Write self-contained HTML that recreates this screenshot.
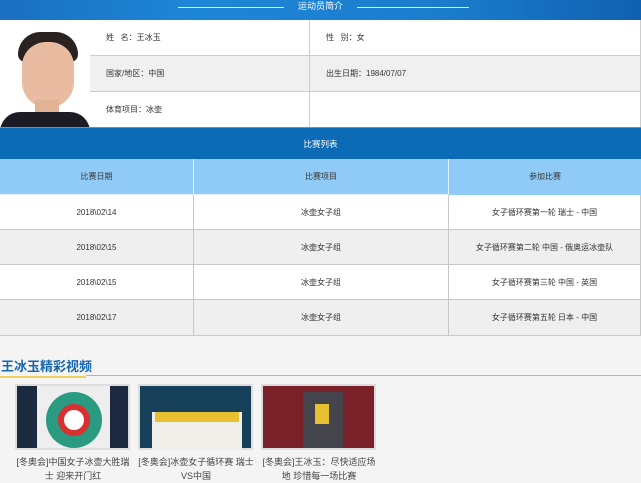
<!DOCTYPE html>
<html><head><meta charset="utf-8"><style>
*{margin:0;padding:0;box-sizing:border-box}
body{width:641px;height:474px;overflow:hidden;background:#f4f4f4;font-family:"Liberation Sans","Noto Sans CJK SC",sans-serif;font-size:8px;color:#333;position:relative}
.a{position:absolute}
.hdr{left:0;top:0;width:641px;height:20px;background:linear-gradient(90deg,#1a6fc0,#1e86d6 30%,#1b7ccc 70%,#1060b0);color:#fff;font-size:9px;text-align:center;line-height:12px}
.cell{position:absolute;border-right:1px solid #ccc;border-bottom:1px solid #ccc;line-height:35px;padding-left:16px}
.t{position:absolute;text-align:center;border-right:1px solid #c8c8c8;border-bottom:1px solid #c8c8c8;line-height:35px}
.thumb{position:absolute;top:384px;width:115px;height:66px;border:2px solid #ddd}
.cap{position:absolute;top:455px;width:116px;text-align:center;font-size:9px;line-height:14px;color:#444}
</style></head><body>
<div class="a hdr">运动员简介
<div class="a" style="left:178px;top:7px;width:106px;height:1px;background:#fff;opacity:.85"></div>
<div class="a" style="left:357px;top:7px;width:112px;height:1px;background:#fff;opacity:.85"></div>
</div>
<div class="a" style="left:0;top:20px;width:641px;height:107px;background:#fff"></div>
<div class="a" style="left:0;top:20px;width:90px;height:107px;background:#fff;overflow:hidden">
 <div class="a" style="left:18px;top:12px;width:60px;height:30px;border-radius:30px 30px 10px 10px;background:#2a2220"></div>
 <div class="a" style="left:22px;top:22px;width:52px;height:66px;border-radius:24px 24px 26px 26px;background:#e9bba0"></div>
 <div class="a" style="left:35px;top:80px;width:24px;height:20px;background:#e2b296"></div>
 <div class="a" style="left:0;top:92px;width:90px;height:20px;border-radius:30px 30px 0 0;background:#1c1c24"></div>
</div>
<div class="cell" style="left:90px;top:20px;width:220px;height:36px;background:#fff">姓&nbsp;&nbsp;&nbsp;名：王冰玉</div>
<div class="cell" style="left:310px;top:20px;width:331px;height:36px;background:#fff">性&nbsp;&nbsp;&nbsp;别：女</div>
<div class="cell" style="left:90px;top:56px;width:220px;height:36px;background:#f0f0f0">国家/地区：中国</div>
<div class="cell" style="left:310px;top:56px;width:331px;height:36px;background:#f0f0f0">出生日期：1984/07/07</div>
<div class="cell" style="left:90px;top:92px;width:220px;height:35px;background:#fff;border-bottom:none">体育项目：冰壶</div>
<div class="cell" style="left:310px;top:92px;width:331px;height:35px;background:#fff;border-bottom:none"></div>
<div class="a" style="left:0;top:127px;width:641px;height:32px;background:#0b6bb6;color:#fff;text-align:center;line-height:32px;font-size:8.5px;border-top:1px solid #4a9ad8">比赛列表</div>
<div class="t" style="left:0;top:159px;width:194px;height:36px;background:#8fcbf6;border-color:#e0f0fc">比赛日期</div>
<div class="t" style="left:194px;top:159px;width:255px;height:36px;background:#8fcbf6;border-color:#e0f0fc">比赛项目</div>
<div class="t" style="left:449px;top:159px;width:192px;height:36px;background:#8fcbf6;border:none">参加比赛</div>
<div class="t" style="left:0;top:195px;width:194px;height:35px;background:#fff">2018\02\14</div>
<div class="t" style="left:194px;top:195px;width:255px;height:35px;background:#fff">冰壶女子组</div>
<div class="t" style="left:449px;top:195px;width:192px;height:35px;background:#fff">女子循环赛第一轮 瑞士 - 中国</div>
<div class="t" style="left:0;top:230px;width:194px;height:35px;background:#efefef">2018\02\15</div>
<div class="t" style="left:194px;top:230px;width:255px;height:35px;background:#efefef">冰壶女子组</div>
<div class="t" style="left:449px;top:230px;width:192px;height:35px;background:#efefef">女子循环赛第二轮 中国 - 俄奥运冰壶队</div>
<div class="t" style="left:0;top:265px;width:194px;height:35px;background:#fff">2018\02\15</div>
<div class="t" style="left:194px;top:265px;width:255px;height:35px;background:#fff">冰壶女子组</div>
<div class="t" style="left:449px;top:265px;width:192px;height:35px;background:#fff">女子循环赛第三轮 中国 - 英国</div>
<div class="t" style="left:0;top:300px;width:194px;height:36px;background:#efefef">2018\02\17</div>
<div class="t" style="left:194px;top:300px;width:255px;height:36px;background:#efefef">冰壶女子组</div>
<div class="t" style="left:449px;top:300px;width:192px;height:36px;background:#efefef">女子循环赛第五轮 日本 - 中国</div>
<div class="a" style="left:1px;top:358px;font-size:13px;font-weight:bold;color:#1466b0;line-height:18px">王冰玉精彩视频</div>
<div class="a" style="left:0;top:376px;width:86px;height:2px;background:#f0d060"></div>
<div class="a" style="left:86px;top:375px;width:555px;height:1px;background:#8cc0e0"></div>
<div class="thumb" style="left:15px;background:#1c2a40"><div class="a" style="left:20px;top:0;width:73px;height:62px;background:#eee"></div><div class="a" style="left:29px;top:6px;width:56px;height:56px;border-radius:50%;background:#2a9a80"></div><div class="a" style="left:41px;top:18px;width:32px;height:32px;border-radius:50%;background:#fff;border:6px solid #d83030"></div></div>
<div class="thumb" style="left:138px;background:#16405a"><div class="a" style="left:12px;top:26px;width:90px;height:38px;background:#f0eee8"></div><div class="a" style="left:15px;top:26px;width:84px;height:10px;background:#e8c030"></div></div>
<div class="thumb" style="left:261px;background:#7a2028"><div class="a" style="left:40px;top:6px;width:40px;height:56px;background:#44444c"></div><div class="a" style="left:52px;top:18px;width:14px;height:20px;background:#e8c030"></div></div>
<div class="cap" style="left:15px">[冬奥会]中国女子冰壶大胜瑞士 迎来开门红</div>
<div class="cap" style="left:138px">[冬奥会]冰壶女子循环赛 瑞士VS中国</div>
<div class="cap" style="left:261px">[冬奥会]王冰玉：尽快适应场地 珍惜每一场比赛</div>
</body></html>
